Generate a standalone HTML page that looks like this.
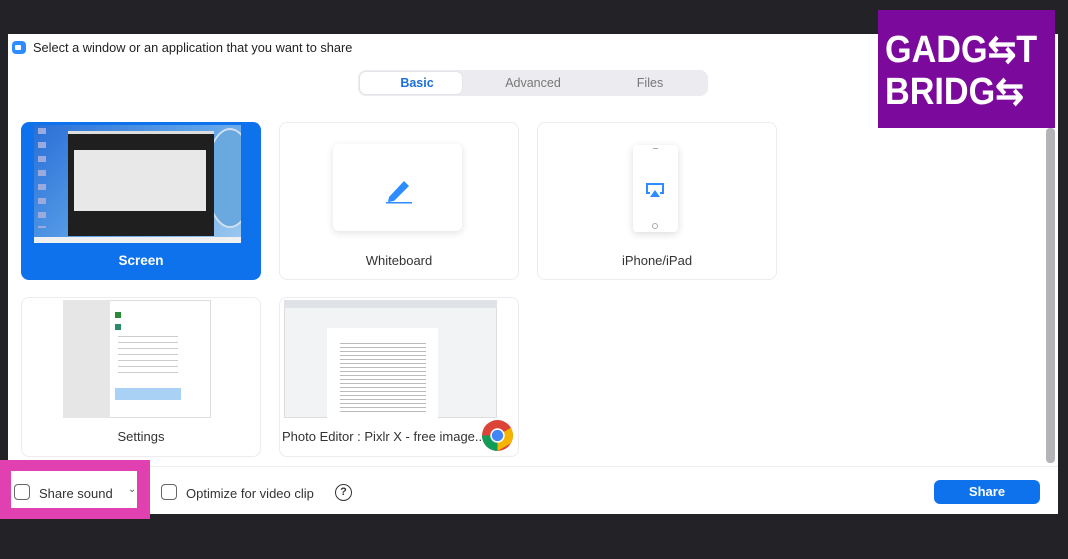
<!DOCTYPE html>
<html><head><meta charset="utf-8"><style>
*{margin:0;padding:0;box-sizing:border-box}
body{width:1068px;height:559px;background:#232226;position:relative;overflow:hidden;font-family:"Liberation Sans",sans-serif}
.abs{position:absolute}
.win{left:8px;top:34px;width:1050px;height:480px;background:#fff}
.card{position:absolute;border:1px solid #ececf0;border-radius:8px;background:#fff}
.lbl{position:absolute;width:100%;text-align:center;font-size:13px;color:#333}
.cb{position:absolute;width:16px;height:16px;border:1.5px solid #666;border-radius:4px;background:#fff}
</style></head><body>
<div class="abs win"></div>
<div class="abs" style="left:12px;top:41px;width:14px;height:13px;background:#2d8cff;border-radius:4px"></div>
<div class="abs" style="left:15px;top:45px;width:6px;height:5px;background:#fff;border-radius:1px"></div>
<div class="abs" style="left:33px;top:40px;font-size:12.8px;color:#222">Select a window or an application that you want to share</div>
<div class="abs" style="left:358px;top:70px;width:350px;height:26px;background:#ececf0;border-radius:8px"></div>
<div class="abs" style="left:359px;top:71px;width:104px;height:24px;background:#fff;border-radius:7px;border:1px solid #e4e4e8"></div>
<div class="abs" style="left:359px;top:76px;width:116px;text-align:center;font-size:12.5px;font-weight:bold;color:#1a6fd8">Basic</div>
<div class="abs" style="left:481px;top:76px;width:104px;text-align:center;font-size:12.5px;color:#777">Advanced</div>
<div class="abs" style="left:598px;top:76px;width:104px;text-align:center;font-size:12.5px;color:#777">Files</div>
<div class="card" style="left:21px;top:122px;width:240px;height:158px;background:#0e72ed;border-color:#0e72ed"></div>
<div class="abs" style="left:34px;top:125px;width:207px;height:118px;background:linear-gradient(135deg,#2a6fd6,#5aa0e8 50%,#9cc8ee)"></div>
<div class="abs" style="left:205px;top:128px;width:50px;height:100px;border-radius:50%;border:2px solid #cfe0f0;background:#6aa8e0;clip-path:inset(0 14px 0 0)"></div>
<div class="abs" style="left:68px;top:131px;width:146px;height:105px;background:#1f1f1f"></div>
<div class="abs" style="left:68px;top:131px;width:146px;height:3px;background:#ddd"></div>
<div class="abs" style="left:74px;top:150px;width:132px;height:61px;background:#e8e8e8"></div>
<div class="abs" style="left:34px;top:237px;width:207px;height:6px;background:#f0f0f0"></div>
<div class="abs" style="left:38px;top:128px;width:8px;height:100px;background:repeating-linear-gradient(#9ad 0 6px,transparent 6px 14px)"></div>
<div class="abs" style="left:21px;top:253px;width:240px;text-align:center;font-size:13.5px;font-weight:bold;color:#fff">Screen</div>
<div class="card" style="left:279px;top:122px;width:240px;height:158px"></div>
<div class="abs" style="left:333px;top:144px;width:129px;height:87px;background:#fff;border-radius:6px;box-shadow:0 2px 8px rgba(0,0,0,.12)"></div>
<svg class="abs" style="left:384px;top:173px" width="30" height="32" viewBox="0 0 30 32"><path d="M5 24 L20 8 L25 13 L10 28 L4 29 Z" fill="#2d8cff"/><rect x="2" y="29" width="26" height="1.5" fill="#2d8cff"/></svg>
<div class="lbl" style="left:279px;top:253px;width:240px">Whiteboard</div>
<div class="card" style="left:537px;top:122px;width:240px;height:158px"></div>
<div class="abs" style="left:633px;top:145px;width:45px;height:87px;background:#fff;border-radius:4px;box-shadow:0 2px 8px rgba(0,0,0,.14)"></div>
<div class="abs" style="left:653px;top:148px;width:5px;height:1px;background:#aaa"></div>
<div class="abs" style="left:652px;top:223px;width:6px;height:6px;border:1px solid #aaa;border-radius:50%"></div>
<svg class="abs" style="left:645px;top:182px" width="20" height="16" viewBox="0 0 20 16"><path d="M5 11H2V2H18V11H15" fill="none" stroke="#2d8cff" stroke-width="2"/><path d="M10 8L15 15H5Z" fill="#2d8cff"/></svg>
<div class="lbl" style="left:537px;top:253px;width:240px">iPhone/iPad</div>
<div class="card" style="left:21px;top:297px;width:240px;height:160px"></div>
<div class="abs" style="left:63px;top:300px;width:148px;height:118px;background:#fff;border:1px solid #ddd"></div>
<div class="abs" style="left:63px;top:300px;width:47px;height:118px;background:#e6e6e6"></div>
<div class="abs" style="left:115px;top:388px;width:66px;height:12px;background:#a9d0f5"></div>
<div class="abs" style="left:115px;top:312px;width:6px;height:6px;background:#2a8a3a"></div>
<div class="abs" style="left:115px;top:324px;width:6px;height:6px;background:#2a8a6a"></div>
<div class="abs" style="left:118px;top:336px;width:60px;height:40px;background:repeating-linear-gradient(#ccc 0 1px,transparent 1px 6px)"></div>
<div class="lbl" style="left:21px;top:429px;width:240px">Settings</div>
<div class="card" style="left:279px;top:297px;width:240px;height:160px"></div>
<div class="abs" style="left:284px;top:300px;width:213px;height:118px;background:#f1f3f4;border:1px solid #ddd"></div>
<div class="abs" style="left:284px;top:300px;width:213px;height:8px;background:#dfe3e8"></div>
<div class="abs" style="left:327px;top:328px;width:111px;height:90px;background:#fff"></div>
<div class="abs" style="left:340px;top:343px;width:86px;height:70px;background:repeating-linear-gradient(#bbb 0 1px,transparent 1px 4px)"></div>
<div class="abs" style="left:282px;top:429px;font-size:13px;color:#333">Photo Editor : Pixlr X - free image...</div>
<svg class="abs" style="left:481px;top:419px" width="33" height="33" viewBox="0 0 32 32"><circle cx="16" cy="16" r="15" fill="#db4437"/><path d="M16 16 L29 8.5 A15 15 0 0 1 29 23.5 L16 31Z" fill="#f4b400"/><path d="M16 16 L16 31 A15 15 0 0 1 3 23.5Z" fill="#0f9d58"/><path d="M16 16 L3 23.5 A15 15 0 0 1 1 16 L16 16Z" fill="#0f9d58"/><circle cx="16" cy="16" r="7" fill="#fff"/><circle cx="16" cy="16" r="5.5" fill="#4285f4"/></svg>
<div class="abs" style="left:1046px;top:128px;width:9px;height:335px;background:#b3b3b8;border-radius:4px"></div>
<div class="abs" style="left:8px;top:466px;width:1050px;height:1px;background:#eee"></div>
<div class="abs" style="left:0;top:460px;width:150px;height:59px;background:#e040b0"></div>
<div class="abs" style="left:11px;top:471px;width:126px;height:37px;background:#fff"></div>
<div class="cb" style="left:14px;top:484px"></div>
<div class="abs" style="left:39px;top:486px;font-size:13px;color:#333">Share sound</div>
<div class="abs" style="left:128px;top:484px;font-size:10px;color:#555">&#8964;</div>
<div class="cb" style="left:161px;top:484px"></div>
<div class="abs" style="left:186px;top:486px;font-size:13px;color:#333">Optimize for video clip</div>
<div class="abs" style="left:335px;top:484px;width:17px;height:17px;border:1.5px solid #333;border-radius:50%;font-size:11px;text-align:center;line-height:14px;font-weight:bold;color:#333">?</div>
<div class="abs" style="left:934px;top:480px;width:106px;height:24px;background:#0e72ed;border-radius:6px;color:#fff;font-size:13px;font-weight:bold;text-align:center;line-height:24px">Share</div>
<div class="abs" style="left:878px;top:10px;width:177px;height:118px;background:#7b0a9c"></div>
<div class="abs" style="left:885px;top:29px;font-size:38px;line-height:42px;font-weight:bold;color:#fff;font-family:'Liberation Sans',sans-serif;transform:scaleX(0.9);transform-origin:left;white-space:nowrap">GADG&#8646;T<br>BRIDG&#8646;</div>
</body></html>
